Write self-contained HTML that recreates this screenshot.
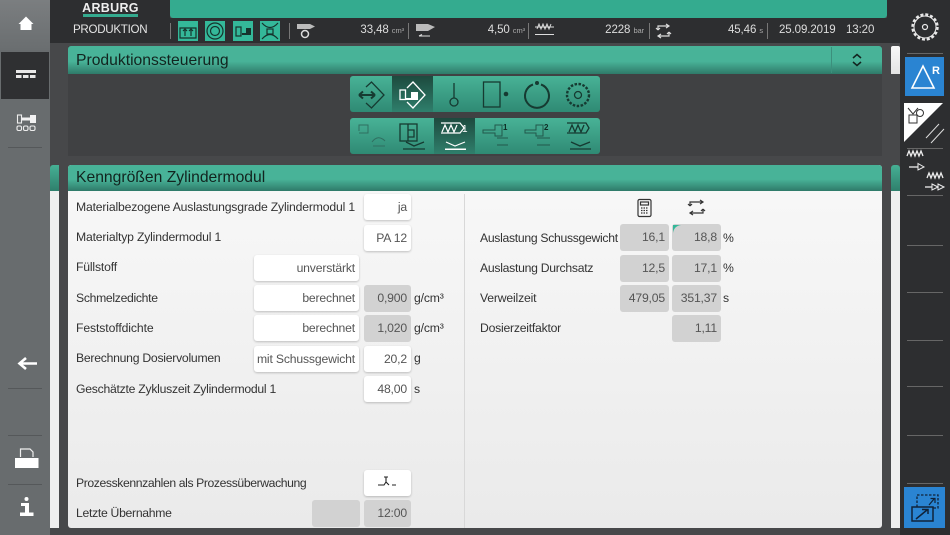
<!DOCTYPE html>
<html><head><meta charset="utf-8">
<style>
*{box-sizing:border-box}
html,body{margin:0;padding:0;width:950px;height:535px;overflow:hidden;background:#47484a;font-family:"Liberation Sans",sans-serif}
.a{position:absolute}
.t{position:absolute;white-space:nowrap;font-size:12.2px;line-height:16px;color:#333;letter-spacing:-.17px}
.w{position:absolute;background:#fff;border-radius:3px;box-shadow:0 1px 2px rgba(0,0,0,.22);font-size:12.2px;letter-spacing:-.17px;line-height:26px;height:26px;color:#555;text-align:right;padding-right:4px;white-space:nowrap}
.g{position:absolute;background:#d2d2d2;border-radius:3px;font-size:12.2px;letter-spacing:-.17px;line-height:26px;height:27px;color:#555;text-align:right;padding-right:4px;white-space:nowrap}
.hd{position:absolute;background:linear-gradient(#48b398 0,#48b398 55%,#2f7a69 100%);border-radius:3px 3px 0 0}
.top{position:absolute;top:22px;color:#ddd;font-size:11.500px;line-height:16px;white-space:nowrap;text-align:right;letter-spacing:-.1px}
.top small{font-size:7.500px;color:#aaa}
.sep{position:absolute;width:1px;background:#777}
.b{position:absolute;height:36px;background:linear-gradient(#48b296,#2f8a74);border-radius:3px}
</style></head><body>

<!-- top band -->
<div class="a" style="left:170px;top:0;width:717px;height:18px;background:#34ab8f;border-radius:0 0 3px 3px"></div>
<div class="a" style="left:50px;top:0;width:120px;height:18px;background:#2d2e30"></div>
<div class="a" style="left:50px;top:18px;width:850px;height:25px;background:#2d2e30"></div>
<div class="a" style="left:887px;top:0;width:13px;height:43px;background:#2d2e30"></div>

<!-- left sidebar -->
<div class="a" style="left:0;top:0;width:50px;height:535px;background:#686c6e"></div>
<div class="a" style="left:0;top:0;width:50px;height:50px;background:linear-gradient(#7b7e80,#6a6e70)"></div>
<div class="a" style="left:1px;top:52px;width:48px;height:47px;background:#2f3032"></div>
<svg class="a" style="left:0;top:0" width="50" height="535">
 <path d="M18.500 24 L26 16.500 L33.500 24 H31.500 V30 H20.500 V24Z" fill="#fff"/>
 <g fill="#e8e8e8"><rect x="16" y="70" width="20" height="3"/><rect x="16" y="75" width="5.500" height="3"/><rect x="23" y="75" width="5.500" height="3"/><rect x="30" y="75" width="5.500" height="3"/></g>
 <g fill="none" stroke="#eee" stroke-width="1.100"><rect x="17.500" y="115" width="4" height="8"/><rect x="17" y="126" width="4.500" height="4.500" rx="1.500"/><rect x="23.500" y="126" width="4.500" height="4.500" rx="1.500"/><rect x="30" y="126" width="5" height="4.500" rx="1.500"/></g>
 <path d="M22 117.500 H30 V115 H36 V123 H30 V120.500 H22Z" fill="#f2f2f2"/>
 <rect x="8" y="147" width="34" height="1" fill="#55585a"/>
 <path d="M26 358 L19.500 363.500 L26 369 M19.500 363.500 H37" fill="none" stroke="#fff" stroke-width="2.600"/>
 <rect x="8" y="388" width="34" height="1" fill="#55585a"/><rect x="8" y="435" width="34" height="1" fill="#55585a"/><rect x="8" y="484" width="34" height="1" fill="#55585a"/>
 <path d="M20.500 457 V449 H30 L33 452 V457" fill="none" stroke="#eee" stroke-width="1.200"/>
 <rect x="15" y="458" width="23.500" height="10" fill="#fff"/>
 <g fill="#fff"><circle cx="26.500" cy="499" r="2"/><path d="M21 503 H29 V512.500 H33.500 V516 H20 V512.500 H25 V506 H21Z"/></g>
</svg>

<!-- logo -->
<div class="a" style="left:80px;top:2px;width:61px;text-align:center;font:bold 12.500px/12px 'Liberation Sans',sans-serif;color:#eee;letter-spacing:.3px">ARBURG</div>
<div class="a" style="left:83px;top:14px;width:55px;height:3px;background:#34ab8f"></div>
<div class="a" style="left:73px;top:22px;font-size:11.600px;letter-spacing:-.3px;line-height:16px;color:#e4e4e4;white-space:nowrap">PRODUKTION</div>
<div class="sep" style="left:170px;top:23px;height:16px"></div>

<!-- top icons -->
<svg class="a" style="left:177px;top:20px" width="105" height="21">
 <g fill="#34b899"><rect x="1" y="1" width="20" height="20"/><rect x="28" y="1" width="20" height="20"/><rect x="56" y="1" width="20" height="20"/><rect x="83" y="1" width="20" height="20"/></g>
 <g fill="none" stroke="#16332c" stroke-width="1.200"><path d="M3 8 H19 V18 H3Z M8 10 V16 M14 10 V16 M6 11 L8 9 L10 11 M12 11 L14 9 L16 11"/>
 <circle cx="38" cy="11" r="8"/><circle cx="38" cy="11" r="4.500"/>
 <rect x="59" y="7" width="5" height="9"/><path d="M85 3 Q93 12 101 3 M85 19 Q93 10 101 19"/><rect x="90" y="9" width="6" height="5"/></g>
 <path d="M65 13 H69 V8 H74 V15 H65Z" fill="#16332c"/>
</svg>
<div class="sep" style="left:289px;top:23px;height:16px"></div>
<svg class="a" style="left:294px;top:21px" width="24" height="20"><path d="M3 3 H16 L21 5.500 L16 8 H3Z" fill="#bbb"/><circle cx="11" cy="13" r="3.500" fill="none" stroke="#ddd" stroke-width="1.500"/></svg>
<div class="top" style="left:340px;width:64px">33,48 <small>cm³</small></div>
<div class="sep" style="left:408px;top:23px;height:16px"></div>
<svg class="a" style="left:415px;top:22px" width="22" height="17"><path d="M1 2 H13 L20 5 L13 9 H1Z" fill="#bbb"/><path d="M4 14 H15 M4 14 L7 12.500" stroke="#ddd" stroke-width="1.100" fill="none"/></svg>
<div class="top" style="left:462px;width:63px">4,50 <small>cm³</small></div>
<div class="sep" style="left:528px;top:23px;height:16px"></div>
<svg class="a" style="left:534px;top:23px" width="22" height="15"><path d="M1 4 H20 M3 6 L5 1 L7 6 L9 1 L11 6 L13 1 L15 6 L17 1 M1 11.500 H20" stroke="#ddd" stroke-width="1" fill="none"/></svg>
<div class="top" style="left:585px;width:59px">2228 <small>bar</small></div>
<div class="sep" style="left:649px;top:23px;height:16px"></div>
<svg class="a" style="left:655px;top:23px" width="18" height="16"><path d="M3 7 V3 H14 M14 9 V13 H3 M11 1 L14 3 L11 5 M6 11 L3 13 L6 15 M3 7 L1 5 M3 7 L5 5 M14 9 L12 11 M14 9 L16 11" fill="none" stroke="#ddd" stroke-width="1.200"/></svg>
<div class="top" style="left:712px;width:51px">45,46 <small>s</small></div>
<div class="sep" style="left:767px;top:23px;height:16px"></div>
<div class="top" style="left:779px">25.09.2019</div>
<div class="top" style="left:846px">13:20</div>

<!-- first panel -->
<div class="a" style="left:68px;top:46px;width:814px;height:110px;background:#404143"></div>
<div class="hd" style="left:68px;top:46px;width:814px;height:28px"></div>
<div class="a" style="left:831px;top:47px;width:1px;height:26px;background:#3c8f7c"></div>
<div class="t" style="left:76px;top:52px;font-size:15.700px;line-height:18px;color:#12241f;letter-spacing:0">Produktionssteuerung</div>
<svg class="a" style="left:850px;top:52px" width="14" height="16"><path d="M3 6 L7 2.500 L11 6 M3 10 L7 13.500 L11 10" fill="none" stroke="#12241f" stroke-width="1.500"/></svg>

<!-- scroll/edges -->
<div class="a" style="left:50px;top:165px;width:9px;height:26px;background:linear-gradient(#46b195,#2f7f6c);border-radius:3px 0 0 0"></div>
<div class="a" style="left:50px;top:191px;width:9px;height:337px;background:#efefef"></div>
<div class="a" style="left:891px;top:46px;width:9px;height:28px;background:linear-gradient(#f8f8f8,#e4e4e4);border-radius:2px 2px 0 0"></div>
<div class="a" style="left:891px;top:165px;width:9px;height:26px;background:linear-gradient(#46b195,#2f7f6c);border-radius:3px 3px 0 0"></div>
<div class="a" style="left:891px;top:191px;width:9px;height:337px;background:#efefef"></div>

<!-- icon button bars -->
<div class="b" style="left:350px;top:76px;width:250px"></div>
<div class="a" style="left:392px;top:76px;width:41px;height:36px;background:linear-gradient(#1d4a3e,#2f7f6c)"></div>
<div class="b" style="left:350px;top:118px;width:250px"></div>
<div class="a" style="left:434px;top:118px;width:41px;height:36px;background:linear-gradient(#1d4a3e,#2f7f6c)"></div>
<svg class="a" style="left:340px;top:70px" width="270" height="90">
 <g fill="none" stroke="#163a31" stroke-width="1.300">
  <path d="M26 17 L31.500 12 L44 25 L31.500 38 L26 33"/>
  <path d="M19 25 H35 M19 25 L23 21.500 M19 25 L23 28.500 M35 25 L31 21.500 M35 25 L31 28.500" stroke-width="2"/>
  <path d="M114 13 V28"/><circle cx="114" cy="32" r="4"/>
  <rect x="143.500" y="12" width="16.500" height="25"/>
  <path d="M193 14.500 A12 12 0 1 0 201 14.500" stroke-width="2"/>
  <circle cx="238" cy="25" r="11" stroke-width="2.400" stroke-dasharray="2.500 1.500"/><circle cx="238" cy="25" r="3.500"/>
  <rect x="60" y="54" width="17" height="17"/><path d="M68 54 V71 M68 60 H74 V67 H68"/>
  <path d="M66 72 L74 76 L84 72 M63 79 H85"/>
  <path d="M143 60 H155 V55 H162 V66 H155 V63 H143Z" stroke="#22584b" stroke-width="1"/>
  <path d="M157 68 H168 M157 75 H168" stroke="#22584b" stroke-width="1"/>
  <path d="M185 60 H196 V55 H203 V66 H196 V63 H185Z" stroke="#22584b" stroke-width="1"/>
  <path d="M197 68 H210 M197 75 H210" stroke="#22584b" stroke-width="1"/>
  <path d="M227 53 H246 L249 58 L246 63 H227 M229 62 L232 55 L235 62 L238 55 L241 62 L244 55"/>
  <path d="M231 72 L240 76 L250 72 M230 79 H251"/>
 </g>
 <circle cx="166" cy="24" r="2.300" fill="#163a31"/>
 <circle cx="197" cy="13" r="2" fill="#163a31"/>
 <g fill="none" stroke="#fff" stroke-width="1.300">
  <path d="M67 18 L73 12 L85 25 L73 38 L67 32"/>
  <rect x="60" y="20" width="5.500" height="9.500"/>
 </g>
 <path d="M66 28 H71 V22 H78 V30 H66Z" fill="#fff"/>
 <path d="M19 61 V55 H28 V63 H19 M32 72 Q38 64 45 71" fill="none" stroke="#2f6f60" stroke-width="1"/>
 <path d="M33 76 H45" stroke="#2f6f60" stroke-width="1"/>
 <g fill="none" stroke="#fff" stroke-width="1.200">
  <path d="M101 53 H120 L124 58 L120 63 H101 M102 62 L105 55 L108 62 L111 55 L114 62 L117 55"/>
  <path d="M106 72 L115 76 L125 72"/>
 </g>
 <rect x="105" y="78.500" width="21" height="1.500" fill="#fff"/>
 <text x="122" y="62" font-size="10" fill="#fff" font-family="Liberation Sans">1</text>
 <text x="163" y="60" font-size="8" font-weight="bold" fill="#0d2b23" font-family="Liberation Sans">1</text>
 <text x="204" y="60" font-size="8" font-weight="bold" fill="#0d2b23" font-family="Liberation Sans">2</text>
</svg>

<!-- main card -->
<div class="a" style="left:68px;top:165px;width:814px;height:363px;background:linear-gradient(#f7f7f7 10%,#eaeaea);border-radius:3px"></div>
<div class="hd" style="left:68px;top:165px;width:814px;height:26px"></div>
<div class="t" style="left:76px;top:169px;font-size:15.700px;line-height:18px;color:#12241f;letter-spacing:0">Kenngrößen Zylindermodul</div>
<div class="a" style="left:464px;top:194px;width:1px;height:334px;background:#d8d8d8"></div>

<div class="t" style="left:76px;top:199px">Materialbezogene Auslastungsgrade Zylindermodul 1</div>
<div class="w" style="left:364px;top:194px;width:47px">ja</div>
<div class="t" style="left:76px;top:229px">Materialtyp Zylindermodul 1</div>
<div class="w" style="left:364px;top:225px;width:47px">PA 12</div>
<div class="t" style="left:76px;top:259px">Füllstoff</div>
<div class="w" style="left:254px;top:255px;width:105px">unverstärkt</div>
<div class="t" style="left:76px;top:290px;letter-spacing:-.31px">Schmelzedichte</div>
<div class="w" style="left:254px;top:285px;width:105px">berechnet</div>
<div class="g" style="left:364px;top:285px;width:47px">0,900</div>
<div class="t" style="left:414px;top:290px">g/cm³</div>
<div class="t" style="left:76px;top:320px;letter-spacing:-.1px">Feststoffdichte</div>
<div class="w" style="left:254px;top:315px;width:105px">berechnet</div>
<div class="g" style="left:364px;top:315px;width:47px">1,020</div>
<div class="t" style="left:414px;top:320px">g/cm³</div>
<div class="t" style="left:76px;top:350px;letter-spacing:-.25px">Berechnung Dosiervolumen</div>
<div class="w" style="left:254px;top:346px;width:105px">mit Schussgewicht</div>
<div class="w" style="left:364px;top:346px;width:47px">20,2</div>
<div class="t" style="left:414px;top:350px">g</div>
<div class="t" style="left:76px;top:381px;letter-spacing:-.25px">Geschätzte Zykluszeit Zylindermodul 1</div>
<div class="w" style="left:364px;top:376px;width:47px">48,00</div>
<div class="t" style="left:414px;top:381px">s</div>
<div class="t" style="left:76px;top:475px;letter-spacing:-.39px">Prozesskennzahlen als Prozessüberwachung</div>
<div class="w" style="left:364px;top:470px;width:47px"></div>
<svg class="a" style="left:376px;top:474px" width="24" height="18"><path d="M2 11 H8 L10 8 V3 M8 3 H12 M10 8 L13 11 M16 11 H20" fill="none" stroke="#222" stroke-width="1.100"/></svg>
<div class="t" style="left:76px;top:505px;letter-spacing:-.29px">Letzte Übernahme</div>
<div class="g" style="left:312px;top:500px;width:48px"></div>
<div class="g" style="left:364px;top:500px;width:47px">12:00</div>

<svg class="a" style="left:636px;top:198px" width="74" height="20">
 <g fill="none" stroke="#333" stroke-width="1.200"><rect x="2" y="1.500" width="13" height="17" rx="1.500"/><rect x="4.500" y="4" width="8" height="3"/><path d="M5 10 H12 M5 12.500 H12 M5 15 H12" stroke-dasharray="1.500 1"/>
 <path d="M54 8 V4 H67 M67 11 V15 H54 M64 2 L67 4 L64 6 M57 13 L54 15 L57 17 M54 8 L52 6 M54 8 L56 6 M67 11 L65 13 M67 11 L69 13"/></g>
</svg>
<div class="t" style="left:480px;top:230px;letter-spacing:-.3px">Auslastung Schussgewicht</div>
<div class="g" style="left:620px;top:224px;width:49px">16,1</div>
<div class="g" style="left:672px;top:224px;width:49px">18,8</div>
<svg class="a" style="left:672px;top:224px" width="12" height="12"><path d="M1 9 Q2 2 9 1 H1Z" fill="#34b899"/></svg>
<div class="t" style="left:723px;top:230px">%</div>
<div class="t" style="left:480px;top:260px;letter-spacing:-.27px">Auslastung Durchsatz</div>
<div class="g" style="left:620px;top:255px;width:49px">12,5</div>
<div class="g" style="left:672px;top:255px;width:49px">17,1</div>
<div class="t" style="left:723px;top:260px">%</div>
<div class="t" style="left:480px;top:290px">Verweilzeit</div>
<div class="g" style="left:620px;top:285px;width:49px">479,05</div>
<div class="g" style="left:672px;top:285px;width:49px">351,37</div>
<div class="t" style="left:723px;top:290px">s</div>
<div class="t" style="left:480px;top:320px;letter-spacing:-.23px">Dosierzeitfaktor</div>
<div class="g" style="left:672px;top:315px;width:49px">1,11</div>

<!-- right sidebar -->
<div class="a" style="left:900px;top:0;width:50px;height:535px;background:#2d2e30"></div>
<svg class="a" style="left:900px;top:0" width="50" height="535">
 <circle cx="25" cy="27" r="12.500" fill="none" stroke="#e8e8e8" stroke-width="2.400" stroke-dasharray="3 1.900"/>
 <circle cx="25" cy="27" r="11" fill="none" stroke="#e8e8e8" stroke-width="1"/>
 <circle cx="25" cy="27" r="2.500" fill="none" stroke="#e8e8e8" stroke-width="1.200"/>
 <g fill="#666"><rect x="7" y="53" width="36" height="1"/><rect x="7" y="148" width="36" height="1"/><rect x="7" y="195" width="36" height="1"/><rect x="7" y="245" width="36" height="1"/><rect x="7" y="292" width="36" height="1"/><rect x="7" y="340" width="36" height="1"/><rect x="7" y="386" width="36" height="1"/><rect x="7" y="435" width="36" height="1"/><rect x="7" y="483" width="36" height="1"/></g>
 <rect x="5" y="57" width="39" height="39" fill="#2a84d2"/>
 <path d="M12 88 L23 66 L34 88Z" fill="none" stroke="#fff" stroke-width="1.600"/>
 <text x="32" y="74" font-size="11" font-weight="bold" fill="#fff" font-family="Liberation Sans">R</text>
 <path d="M4 103 H43 L4 142Z" fill="#fff"/>
 <g fill="none" stroke="#333" stroke-width="1"><rect x="9" y="115" width="8" height="8"/><path d="M8 108 L13 114 L18 108"/><circle cx="20" cy="113" r="3.500"/></g>
 <path d="M26 138 L39 124 M31 143 L44 129" stroke="#ddd" stroke-width="1"/>
 <path d="M7 156 L9 151 L11 156 L13 151 L15 156 L17 151 L19 156 L21 151 L23 156" fill="none" stroke="#eee" stroke-width="1.300"/>
 <path d="M9 167 H18" stroke="#eee" stroke-width="1.300"/><path d="M18 163.500 L24 167 L18 170Z" fill="none" stroke="#eee"/>
 <path d="M27 178 L29 173 L31 178 L33 173 L35 178 L37 173 L39 178 L41 173 L43 178" fill="none" stroke="#eee" stroke-width="1.300"/>
 <path d="M25 187 H32" stroke="#eee" stroke-width="1.300"/><path d="M32 184 L38 187 L32 190Z M38 184 L44 187 L38 190Z" fill="none" stroke="#eee"/>
 <rect x="4" y="487" width="41" height="41" fill="#2a84d2"/>
 <rect x="17" y="495" width="21" height="13" fill="none" stroke="#10233a" stroke-width="1.300" stroke-dasharray="2.500 1.500"/>
 <rect x="12" y="507" width="21" height="14" fill="#2a84d2" stroke="#10233a" stroke-width="1.500"/>
 <path d="M16 519 L27 510 M22 509.500 H28 V514" fill="none" stroke="#10233a" stroke-width="1.500"/>
 <path d="M29 505 L34 499 M30.500 498.500 H35 V503" fill="none" stroke="#10233a" stroke-width="1.200"/>
</svg>
</body></html>
